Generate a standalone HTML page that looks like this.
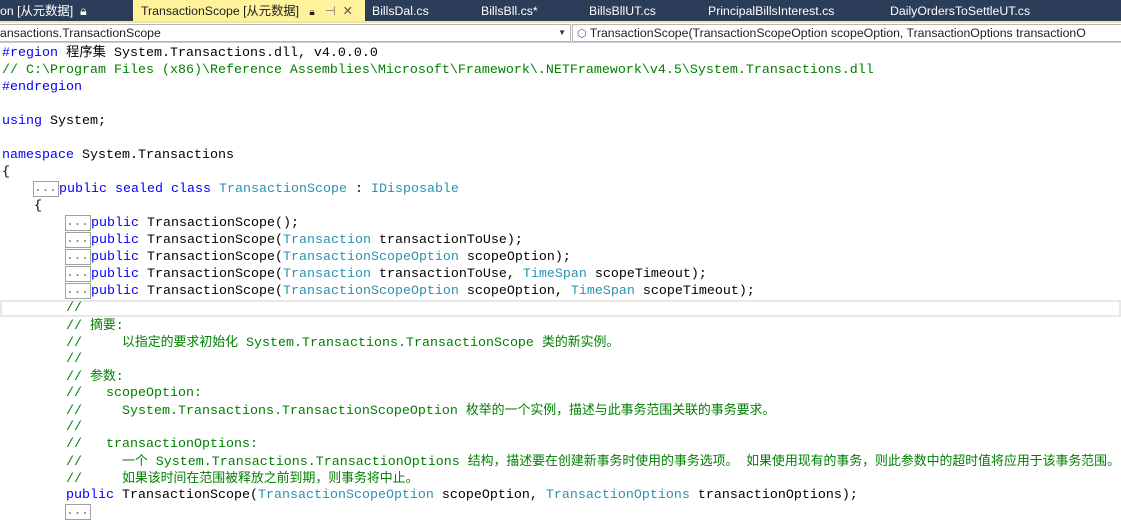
<!DOCTYPE html>
<html><head><meta charset="utf-8">
<style>
*{margin:0;padding:0;box-sizing:border-box}
body{width:1121px;height:508px;overflow:hidden;background:#fff;position:relative;font-family:"Liberation Sans","Noto Sans CJK SC",sans-serif}
#tabs{position:absolute;left:0;top:0;width:1121px;height:21px;background:#2c3d5a}
.tab{position:absolute;top:0;height:21px;font-size:12.3px;line-height:22px;color:#fff;white-space:nowrap}
#act{left:133px;width:232px;background:#fff29d;color:#1e1e1e;padding-left:8px}
#yl{position:absolute;left:0;top:21px;width:1121px;height:2px;background:#eee5a8}
#nav{position:absolute;left:0;top:23px;width:1121px;height:20px;background:#fff;border-bottom:1px solid #ccc}
.dd{position:absolute;top:1px;height:18px;border:1px solid #b5b5b5;background:#fff;font-size:12.3px;line-height:16px;color:#1e1e1e;white-space:nowrap;overflow:hidden}
.ln{position:absolute;left:2px;height:17px;font-family:"Liberation Mono","Noto Sans CJK SC",monospace;font-size:13.33px;line-height:17px;white-space:pre;color:#000}
.k{color:#0000ff}.t{color:#2b91af}.c{color:#008000}
.z{font-size:12.9px}
.bx{display:inline-block;width:26px;margin-left:-1px;height:16px;border:1px solid #a0a0a0;color:#808080;vertical-align:top;line-height:14px;overflow:hidden;letter-spacing:-0.5px}
#hl{position:absolute;left:0;top:300px;width:1121px;height:17px;border:2px solid #e8e8e8}
</style></head><body>
<div id="tabs">
<div class="tab" style="left:0">on [从元数据] &nbsp;🔒︎</div>
<div class="tab" id="act">TransactionScope [从元数据] &nbsp; <span style="font-size:10px">🔒︎</span> &nbsp; <span style="color:#777">⊣</span> &nbsp;<span style="color:#555">✕</span></div>
<div class="tab" style="left:372px">BillsDal.cs</div>
<div class="tab" style="left:481px">BillsBll.cs*</div>
<div class="tab" style="left:589px">BillsBllUT.cs</div>
<div class="tab" style="left:708px">PrincipalBillsInterest.cs</div>
<div class="tab" style="left:890px">DailyOrdersToSettleUT.cs</div>
</div>
<div id="yl"></div>
<div id="nav">
<div class="dd" style="left:-1px;width:572px">ansactions.TransactionScope<span style="position:absolute;right:4px;top:0;font-size:8px;color:#333">▼</span></div>
<div class="dd" style="left:572px;width:560px;padding-left:4px"><span style="color:#6a3d9a;font-size:11px">⬡</span> TransactionScope(TransactionScopeOption scopeOption, TransactionOptions transactionO</div>
</div>
<div id="hl"></div>
<div class="ln" style="top:45px"><span class="k">#region</span> 程序集 System.Transactions.dll, v4.0.0.0</div>
<div class="ln c" style="top:62px">// C:\Program Files (x86)\Reference Assemblies\Microsoft\Framework\.NETFramework\v4.5\System.Transactions.dll</div>
<div class="ln k" style="top:79px">#endregion</div>
<div class="ln" style="top:113px"><span class="k">using</span> System;</div>
<div class="ln" style="top:147px"><span class="k">namespace</span> System.Transactions</div>
<div class="ln" style="top:164px">{</div>
<div class="ln" style="top:181px">    <span class="bx">...</span><span class="k">public sealed class</span> <span class="t">TransactionScope</span> : <span class="t">IDisposable</span></div>
<div class="ln" style="top:198px">    {</div>
<div class="ln" style="top:215px">        <span class="bx">...</span><span class="k">public</span> TransactionScope();</div>
<div class="ln" style="top:232px">        <span class="bx">...</span><span class="k">public</span> TransactionScope(<span class="t">Transaction</span> transactionToUse);</div>
<div class="ln" style="top:249px">        <span class="bx">...</span><span class="k">public</span> TransactionScope(<span class="t">TransactionScopeOption</span> scopeOption);</div>
<div class="ln" style="top:266px">        <span class="bx">...</span><span class="k">public</span> TransactionScope(<span class="t">Transaction</span> transactionToUse, <span class="t">TimeSpan</span> scopeTimeout);</div>
<div class="ln" style="top:283px">        <span class="bx">...</span><span class="k">public</span> TransactionScope(<span class="t">TransactionScopeOption</span> scopeOption, <span class="t">TimeSpan</span> scopeTimeout);</div>
<div class="ln c" style="top:300px">        //</div>
<div class="ln c" style="top:317px">        // <span class="z">摘要</span>:</div>
<div class="ln c" style="top:334px">        //     <span class="z">以指定的要求初始化</span> System.Transactions.TransactionScope <span class="z">类的新实例。</span></div>
<div class="ln c" style="top:351px">        //</div>
<div class="ln c" style="top:368px">        // <span class="z">参数</span>:</div>
<div class="ln c" style="top:385px">        //   scopeOption:</div>
<div class="ln c" style="top:402px">        //     System.Transactions.TransactionScopeOption <span class="z">枚举的一个实例，描述与此事务范围关联的事务要求。</span></div>
<div class="ln c" style="top:419px">        //</div>
<div class="ln c" style="top:436px">        //   transactionOptions:</div>
<div class="ln c" style="top:453px">        //     <span class="z">一个</span> System.Transactions.TransactionOptions <span class="z">结构，描述要在创建新事务时使用的事务选项。 如果使用现有的事务，则此参数中的超时值将应用于该事务范围。</span></div>
<div class="ln c" style="top:470px">        //     <span class="z">如果该时间在范围被释放之前到期，则事务将中止。</span></div>
<div class="ln" style="top:487px">        <span class="k">public</span> TransactionScope(<span class="t">TransactionScopeOption</span> scopeOption, <span class="t">TransactionOptions</span> transactionOptions);</div>
<div class="ln" style="top:504px">        <span class="bx">...</span></div>
</body></html>
